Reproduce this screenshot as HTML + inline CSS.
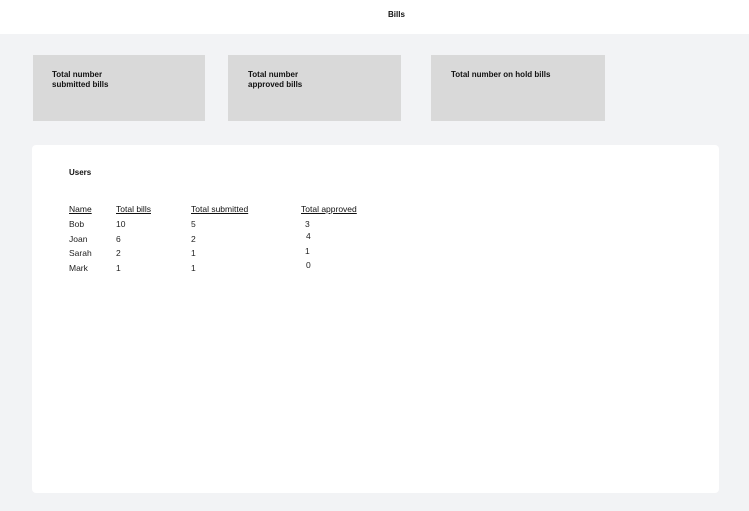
<!DOCTYPE html>
<html><head><style>
*{margin:0;padding:0;box-sizing:border-box}
body{width:749px;height:511px;background:#f2f3f5;font-family:"Liberation Sans",sans-serif;position:relative;overflow:hidden;color:#111}
.hdr{position:absolute;left:0;top:0;width:749px;height:34px;background:#fff}
.t{position:absolute;font-size:8px;white-space:nowrap;line-height:10px}
.b{font-weight:bold}
.card{position:absolute;top:55px;height:66px;background:#d9d9d9}
.panel{position:absolute;left:32px;top:145px;width:687px;height:348px;background:#fff;border-radius:4px}
.u{text-decoration:underline;font-size:8.5px}
.r{color:#222;font-size:8.5px}
</style></head><body>
<div class="hdr"></div>
<div class="t b" style="left:388px;top:10px">Bills</div>
<div class="card" style="left:33px;width:172px"></div>
<div class="card" style="left:228px;width:173px"></div>
<div class="card" style="left:431px;width:174px"></div>
<div class="t b" style="left:52px;top:70px">Total number<br>submitted bills</div>
<div class="t b" style="left:248px;top:70px">Total number<br>approved bills</div>
<div class="t b" style="left:451px;top:70px">Total number on hold bills</div>
<div class="panel"></div>
<div class="t b" style="left:69px;top:168px">Users</div>
<div class="t u" style="left:69px;top:204px">Name</div>
<div class="t u" style="left:116px;top:204px">Total bills</div>
<div class="t u" style="left:191px;top:204px">Total submitted</div>
<div class="t u" style="left:301px;top:204px">Total approved</div>
<div class="t r" style="left:69px;top:219px">Bob</div><div class="t r" style="left:116px;top:219px">10</div><div class="t r" style="left:191px;top:219px">5</div><div class="t r" style="left:305px;top:219px">3</div>
<div class="t r" style="left:69px;top:234px">Joan</div><div class="t r" style="left:116px;top:234px">6</div><div class="t r" style="left:191px;top:234px">2</div><div class="t r" style="left:306px;top:231px">4</div>
<div class="t r" style="left:69px;top:248px">Sarah</div><div class="t r" style="left:116px;top:248px">2</div><div class="t r" style="left:191px;top:248px">1</div><div class="t r" style="left:305px;top:246px">1</div>
<div class="t r" style="left:69px;top:263px">Mark</div><div class="t r" style="left:116px;top:263px">1</div><div class="t r" style="left:191px;top:263px">1</div><div class="t r" style="left:306px;top:260px">0</div>
</body></html>
